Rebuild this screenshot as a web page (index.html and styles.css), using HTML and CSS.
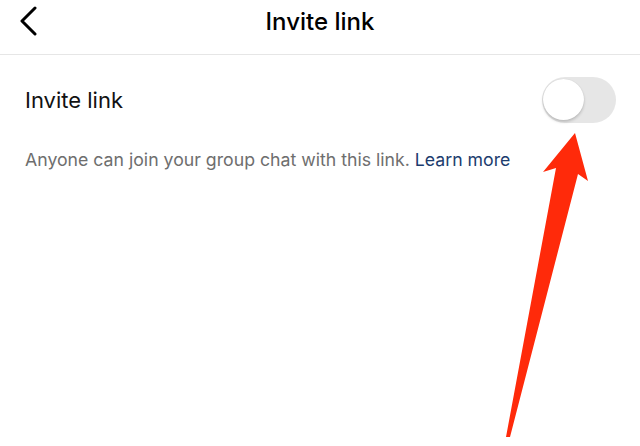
FILE: index.html
```html
<!DOCTYPE html>
<html>
<head>
<meta charset="utf-8">
<link rel="stylesheet" href="styles.css">
</head>
<body>
<div class="screen">
  <header class="topbar">
    <button class="back" aria-label="Back">
      <svg width="20" height="30" viewBox="0 0 20 30"><path d="M16 2 L3 15 L16 28" fill="none" stroke="#000" stroke-width="3" stroke-linecap="round" stroke-linejoin="round"/></svg>
    </button>
    <h1 class="title">Invite link</h1>
  </header>
  <section class="content">
    <div class="row">
      <span class="label">Invite link</span>
      <span class="toggle"><span class="knob"></span></span>
    </div>
    <p class="caption">Anyone can join your group chat with this link. <a class="learn">Learn more</a></p>
  </section>
  <svg class="arrow" width="640" height="446" viewBox="0 0 640 446">
    <polygon points="575,133 588,181 578,174 510,437 506,437 556,168 543,172" fill="#ff2a0a"/>
  </svg>
</div>
</body>
</html>
```
FILE: styles.css
```css
* { box-sizing: border-box; }
html, body { margin: 0; padding: 0; background: #fff; }
.screen {
  position: relative;
  width: 640px;
  height: 446px;
  overflow: hidden;
  font-family: Inter, Roboto, "Noto Sans", sans-serif;
}
.topbar {
  height: 55px;
  border-bottom: 1px solid #e6e6e6;
  display: flex;
  align-items: center;
  justify-content: center;
  position: relative;
}
.back {
  position: absolute;
  left: 19px;
  top: 6px;
  border: 0;
  background: none;
  padding: 0;
  width: 20px;
  height: 30px;
}
.back svg { display: block; }
.title {
  margin: 0;
  font-size: 24px;
  font-weight: 500;
  color: #000;
  margin-top: -12px;
}
.content {
  padding: 22px 24px 0 25px;
}
.row {
  display: flex;
  align-items: center;
  justify-content: space-between;
  height: 46px;
}
.label {
  font-size: 22px;
  color: #111;
}
.toggle {
  width: 74px;
  height: 46px;
  border-radius: 23px;
  background: #e6e6e6;
  position: relative;
}
.knob {
  position: absolute;
  left: 1px;
  top: 2px;
  width: 41px;
  height: 41px;
  border-radius: 50%;
  background: #fff;
  box-shadow: 0 2px 3px rgba(0,0,0,0.18), 0 0 1px rgba(0,0,0,0.12);
}
.caption {
  margin: 26px 0 0 0;
  font-size: 17.7px;
  color: #6e6e6e;
}
.learn { color: #1c3c6e; }
.arrow {
  position: absolute;
  left: 0;
  top: 0;
}
```
